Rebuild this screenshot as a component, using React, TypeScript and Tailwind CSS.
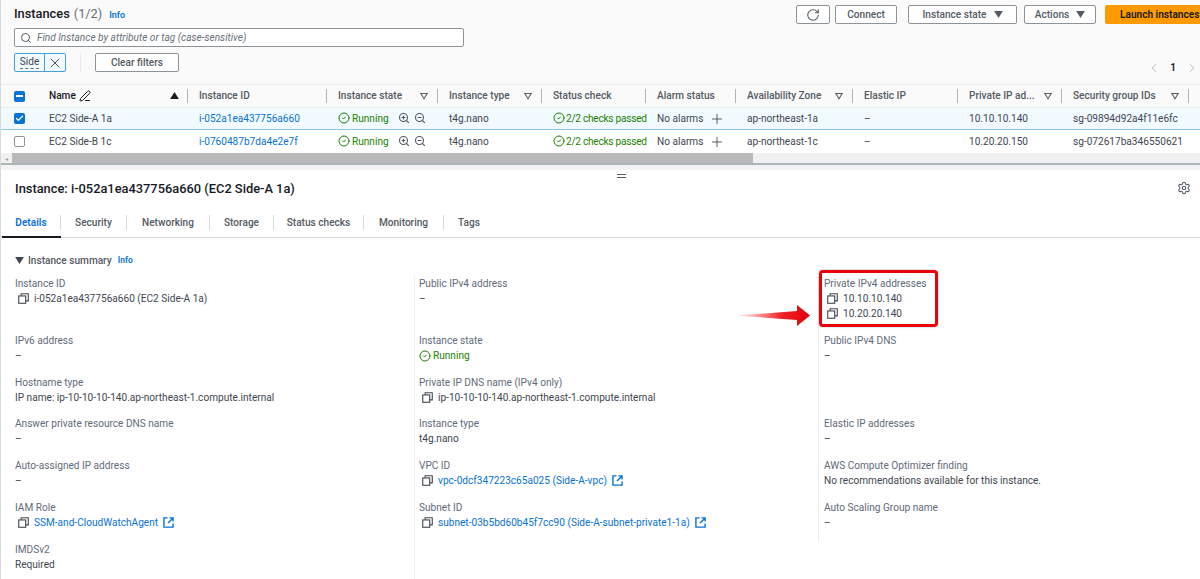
import React from "react";
import { CircleCheck, ZoomIn, ZoomOut, Plus, X, Search, RotateCw, Settings, ChevronLeft, ChevronRight, Check, PenLine } from "lucide-react";

const Copy = () => (
  <svg viewBox="0 0 12 12" className="w-[11px] h-[11px] shrink-0 text-[#414750]" fill="none" stroke="currentColor" strokeWidth="1.2">
    <rect x="0.8" y="3.2" width="7.6" height="8" />
    <path d="M3.4 3V0.8H11.2V8.6H8.6" />
  </svg>
);
const Ext = () => (
  <svg viewBox="0 0 12 12" className="w-[11px] h-[11px] shrink-0 text-[#0972d3]" fill="none" stroke="currentColor" strokeWidth="1.5">
    <path d="M5 1H1V11H11V7" />
    <path d="M7 1H11V5M11 1L5.5 6.5" />
  </svg>
);
const FilterDown = () => (
  <svg viewBox="0 0 10 10" className="w-[8px] h-[8px] shrink-0 text-[#545b64]" fill="none" stroke="currentColor" strokeWidth="1.3">
    <path d="M1 2H9L5 8.5Z" />
  </svg>
);
const Caret = ({ className = "" }: { className?: string }) => (
  <svg viewBox="0 0 10 8" className={"w-[9px] h-[7px] shrink-0 " + className} fill="currentColor">
    <path d="M0 0H10L5 8Z" />
  </svg>
);

const cols: { label: React.ReactNode; w: string; filter?: boolean }[] = [
  { label: "Instance ID", w: "w-[139px]" },
  { label: "Instance state", w: "w-[111px]", filter: true },
  { label: "Instance type", w: "w-[104px]", filter: true },
  { label: "Status check", w: "w-[104px]" },
  { label: "Alarm status", w: "w-[90px]" },
  { label: "Availability Zone", w: "w-[117px]", filter: true },
  { label: "Elastic IP", w: "w-[105px]" },
  { label: "Private IP ad...", w: "w-[104px]", filter: true },
  { label: "Security group IDs", w: "w-[127px]", filter: true },
];

function HeaderRow() {
  return (
    <div className="flex h-[24px] items-center border-y border-[#eaeded] bg-[#fafafa] font-medium text-[#545b64]">
      <div className="w-[48px] pl-[13px] shrink-0">
        <div className="w-[11px] h-[11px] rounded-[2px] bg-[#0972d3] flex items-center justify-center">
          <div className="w-[7px] h-[1.5px] bg-white" />
        </div>
      </div>
      <div className="w-[150px] shrink-0 flex items-center pr-[11px] text-[#16191f]">
        <span>Name</span>
        <PenLine className="w-[12px] h-[12px] ml-[3px] text-[#16191f]" strokeWidth={2} />
        <span className="flex-1" />
        <Caret className="rotate-180 text-[#16191f] mr-[8px]" />
        <div className="w-px h-[14px] bg-[#aab7b8]" />
      </div>
      {cols.map((c, i) => (
        <div key={i} className={c.w + " shrink-0 flex items-center pr-[11px]"}>
          <span className="whitespace-nowrap">{c.label}</span>
          <span className="flex-1" />
          {c.filter && <span className="mr-[9px] flex"><FilterDown /></span>}
          <div className="w-px h-[14px] bg-[#aab7b8]" />
        </div>
      ))}
    </div>
  );
}

function DataRow({ selected, name, id, type, az, ip, sg }: { selected: boolean; name: string; id: string; type: string; az: string; ip: string; sg: string }) {
  return (
    <div className={"flex items-center text-[#414750] whitespace-nowrap " + (selected ? "h-[22px] bg-[#f1faff] border-b border-[#8fc3e8]" : "h-[23px] bg-white")}>
      <div className="w-[48px] pl-[13px] shrink-0">
        {selected ? (
          <div className="w-[11px] h-[11px] rounded-[2px] bg-[#0972d3] flex items-center justify-center">
            <Check className="w-[9px] h-[9px] text-white" strokeWidth={3.5} />
          </div>
        ) : (
          <div className="w-[11px] h-[11px] rounded-[2px] border border-[#8d9499] bg-white" />
        )}
      </div>
      <div className="w-[150px] shrink-0">{name}</div>
      <div className="w-[139px] shrink-0 text-[#0972d3]">{id}</div>
      <div className="w-[111px] shrink-0 flex items-center text-[#1d8102]">
        <CircleCheck className="w-[12px] h-[12px] mr-[2px]" strokeWidth={2} />
        <span>Running</span>
        <ZoomIn className="w-[12px] h-[12px] ml-[9px] text-[#545b64]" strokeWidth={2.2} />
        <ZoomOut className="w-[12px] h-[12px] ml-[4px] text-[#545b64]" strokeWidth={2.2} />
      </div>
      <div className="w-[104px] shrink-0">{type}</div>
      <div className="w-[104px] shrink-0 flex items-center text-[#1d8102] overflow-hidden">
        <CircleCheck className="w-[12px] h-[12px] mr-[1px] shrink-0" strokeWidth={2} />
        <span className="tracking-[-0.25px]">2/2 checks passed</span>
      </div>
      <div className="w-[90px] shrink-0 flex items-center">
        <span>No alarms</span>
        <Plus className="w-[16px] h-[16px] ml-[6px]" strokeWidth={1.3} />
      </div>
      <div className="w-[117px] shrink-0">{az}</div>
      <div className="w-[105px] shrink-0">–</div>
      <div className="w-[104px] shrink-0">{ip}</div>
      <div className="w-[127px] shrink-0">{sg}</div>
    </div>
  );
}

const Btn = ({ children, className = "" }: { children: React.ReactNode; className?: string }) => (
  <div className={"h-[19px] flex items-center justify-center gap-[7px] border border-[#8d9499] rounded-[2px] bg-white font-medium text-[#545b64] shrink-0 " + className}>
    {children}
  </div>
);

const Label = ({ children }: { children: React.ReactNode }) => <div className="text-[#5f6b7a] leading-[15px]">{children}</div>;
const Value = ({ children, copy }: { children: React.ReactNode; copy?: boolean }) => (
  <div className="flex items-center gap-[5px] leading-[15px] text-[#414750] whitespace-nowrap">
    {copy && <span className="ml-[3px] flex"><Copy /></span>}
    {children}
  </div>
);
const Link = ({ children }: { children: React.ReactNode }) => <span className="text-[#0972d3]">{children}</span>;

const Running = () => (
  <div className="flex items-center gap-[2px] leading-[15px] text-[#1d8102]">
    <CircleCheck className="w-[12px] h-[12px]" strokeWidth={2} />
    Running
  </div>
);

const col1: [string, React.ReactNode][] = [
  ["Instance ID", <Value copy>i-052a1ea437756a660 (EC2 Side-A 1a)</Value>],
  ["IPv6 address", <Value>–</Value>],
  ["Hostname type", <Value>IP name: ip-10-10-10-140.ap-northeast-1.compute.internal</Value>],
  ["Answer private resource DNS name", <Value>–</Value>],
  ["Auto-assigned IP address", <Value>–</Value>],
  ["IAM Role", <Value copy><Link>SSM-and-CloudWatchAgent</Link><Ext /></Value>],
  ["IMDSv2", <Value>Required</Value>],
];
const col2: [string, React.ReactNode][] = [
  ["Public IPv4 address", <Value>–</Value>],
  ["Instance state", <Running />],
  ["Private IP DNS name (IPv4 only)", <Value copy>ip-10-10-10-140.ap-northeast-1.compute.internal</Value>],
  ["Instance type", <Value>t4g.nano</Value>],
  ["VPC ID", <Value copy><Link>vpc-0dcf347223c65a025 (Side-A-vpc)</Link><Ext /></Value>],
  ["Subnet ID", <Value copy><Link>subnet-03b5bd60b45f7cc90 (Side-A-subnet-private1-1a)</Link><Ext /></Value>],
  ["", null],
];
const col3: [string, React.ReactNode][] = [
  ["Private IPv4 addresses", null],
  ["Public IPv4 DNS", <Value>–</Value>],
  ["", null],
  ["Elastic IP addresses", <Value>–</Value>],
  ["AWS Compute Optimizer finding", <Value>No recommendations available for this instance.</Value>],
  ["Auto Scaling Group name", <Value>–</Value>],
  ["", null],
];

export default function App() {
  const rows = col1.map((_, i) => i);
  return (
    <div className="w-[1200px] h-[579px] overflow-hidden bg-white text-[10.1px] text-[#16191f] border-l border-[#d5dbdb]" style={{ fontFamily: 'Roboto, "Noto Sans", sans-serif' }}>
      {/* Top panel */}
      <div className="bg-[#fafafa] h-[165px] flex flex-col border-b-2 border-[#aab7b8]">
        <div className="h-[84px] shrink-0 flex pl-[13px]">
          <div className="w-[782px] shrink-0 pt-[6px]">
            <div className="flex items-baseline h-[17px] leading-[16px]">
              <span className="text-[12.8px] font-medium text-[#16191f]">Instances</span>
              <span className="text-[12.8px] text-[#687078] ml-[4px]">(1/2)</span>
              <span className="text-[9px] font-semibold text-[#0972d3] ml-[7px]">Info</span>
            </div>
            <div className="mt-[5px] h-[19px] w-[450px] border border-[#8d9499] rounded-[2px] bg-white flex items-center pl-[5px]">
              <Search className="w-[12px] h-[12px] text-[#545b64]" strokeWidth={2} />
              <span className="ml-[5px] italic text-[#687078]">Find Instance by attribute or tag (case-sensitive)</span>
            </div>
            <div className="mt-[6px] flex items-center">
              <div className="h-[19px] w-[52px] flex border border-[#4a9fdb] rounded-[2px] bg-[#f1faff]">
                <span className="w-[30px] flex items-center justify-center border-r border-[#4a9fdb] text-[#414750]">
                  <span className="border-b border-dashed border-[#687078] leading-[12px]">Side</span>
                </span>
                <span className="flex-1 flex items-center justify-center"><X className="w-[16px] h-[16px] text-[#414750]" strokeWidth={1.4} /></span>
              </div>
              <div className="ml-[14px] mr-[14px] w-px h-[19px] bg-[#eaeded]" />
              <Btn className="w-[84px]">Clear filters</Btn>
            </div>
          </div>
          <div className="flex-1 min-w-0 flex flex-col">
            <div className="pt-[5px] flex">
              <Btn className="w-[34px]"><RotateCw className="w-[14px] h-[14px]" strokeWidth={1.8} /></Btn>
              <Btn className="w-[62px] ml-[5px]">Connect</Btn>
              <Btn className="w-[109px] ml-[11px]">Instance state<Caret className="text-[#545b64]" /></Btn>
              <Btn className="w-[72px] ml-[7px]">Actions<Caret className="text-[#545b64]" /></Btn>
              <div className="h-[19px] w-[110px] ml-[9px] pl-[15px] flex items-center bg-[#ff9900] rounded-[2px] font-semibold text-[#16191f] shrink-0 whitespace-nowrap">Launch instances</div>
            </div>
            <div className="mt-[36px] flex items-center justify-end pr-[1px] gap-[9px] text-[#16191f]">
              <ChevronLeft className="w-[14px] h-[14px] text-[#aab7b8]" strokeWidth={1.6} />
              <span className="font-semibold">1</span>
              <ChevronRight className="w-[14px] h-[14px] text-[#aab7b8]" strokeWidth={1.6} />
            </div>
          </div>
        </div>
        <HeaderRow />
        <DataRow selected name="EC2 Side-A 1a" id="i-052a1ea437756a660" type="t4g.nano" az="ap-northeast-1a" ip="10.10.10.140" sg="sg-09894d92a4f11e6fc" />
        <DataRow selected={false} name="EC2 Side-B 1c" id="i-0760487b7da4e2e7f" type="t4g.nano" az="ap-northeast-1c" ip="10.20.20.150" sg="sg-072617ba346550621" />
        <div className="flex-1 bg-[#f1f1f1] flex items-stretch">
          <div className="w-[11px] flex items-center justify-center text-[#a0a0a0] text-[6px]">◂</div>
          <div className="w-[741px] bg-[#b9b9b9]" />
        </div>
      </div>
      {/* Splitter */}
      <div className="h-[5px] bg-[#f2f3f3]" />
      {/* Bottom panel */}
      <div className="relative bg-white">
        <div className="h-[37px] flex items-start justify-between pl-[14px] pr-[9px] pt-[9px]">
          <span className="text-[12.85px] font-medium leading-[20px]">Instance: i-052a1ea437756a660 (EC2 Side-A 1a)</span>
          <Settings className="w-[14px] h-[14px] text-[#545b64] mt-[2px]" strokeWidth={1.8} />
        </div>
        <div className="absolute left-[616px] top-[4px] w-[9px] h-[4px] border-y border-[#545b64]" />
        <div className="h-[31px] pt-[1px] flex items-center border-b border-[#d5dbdb] font-medium text-[#545b64] relative pl-[1px]">
          {[
            ["Details", "w-[59px]"],
            ["Security", "w-[66px]"],
            ["Networking", "w-[83px]"],
            ["Storage", "w-[64px]"],
            ["Status checks", "w-[90px]"],
            ["Monitoring", "w-[80px]"],
            ["Tags", "w-[50px]"],
          ].map(([t, w], i) => (
            <div key={t} className={w + " h-[15px] flex items-center justify-center " + (i === 6 ? "" : "border-r border-[#d5dbdb] ") + (i === 0 ? "text-[#0972d3] font-semibold" : "")}>
              {t}
            </div>
          ))}
          <div className="absolute left-[1px] bottom-[-1px] w-[59px] h-[2px] bg-[#16191f]" />
        </div>
        <div className="pl-[14px] pt-[15px] flex items-center h-[30px] font-medium text-[#545b64]">
          <Caret className="mr-[4px] text-[#414750]" />
          <span>Instance summary</span>
          <span className="ml-[6px] text-[8.5px] font-semibold text-[#0972d3]">Info</span>
        </div>
        <div className="grid grid-cols-[413px_404px_1fr] grid-rows-[57px_42px_41px_42px_42px_42px_42px] mt-[8px]">
          {rows.map((i) => (
            <React.Fragment key={i}>
              <div className="pl-[14px]">
                <Label>{col1[i][0]}</Label>
                {col1[i][1]}
              </div>
              <div className="pl-[4px] border-l border-[#eaeded]">
                {col2[i][0] && <Label>{col2[i][0]}</Label>}
                {col2[i][1]}
              </div>
              <div className={"pl-[5px] " + (i < 6 ? "border-l border-[#eaeded]" : "")}>
                {i === 0 ? (
                  <div className="relative">
                    <Label>{col3[0][0]}</Label>
                    <Value copy>10.10.10.140</Value>
                    <Value copy>10.20.20.140</Value>
                    <div className="absolute left-[-5px] top-[-6px] w-[119px] h-[57px] border-[3px] border-[#e8000b] rounded-[4px] shadow-[0_0_2px_rgba(0,0,0,0.35)]" />
                    <svg viewBox="0 0 73 21" className="absolute left-[-87px] top-[29px] w-[73px] h-[21px]">
                      <defs>
                        <linearGradient id="arrow" x1="0" x2="1" y1="0" y2="0">
                          <stop offset="0" stopColor="#ff5a5a" stopOpacity="0.15" />
                          <stop offset="0.6" stopColor="#f0252a" />
                          <stop offset="1" stopColor="#e00008" />
                        </linearGradient>
                      </defs>
                      <path d="M0 10.5L60 6V0L73 10.5L60 21V15Z" fill="url(#arrow)" />
                    </svg>
                  </div>
                ) : (
                  <>
                    {col3[i][0] && <Label>{col3[i][0]}</Label>}
                    {col3[i][1]}
                  </>
                )}
              </div>
            </React.Fragment>
          ))}
        </div>
      </div>
    </div>
  );
}
